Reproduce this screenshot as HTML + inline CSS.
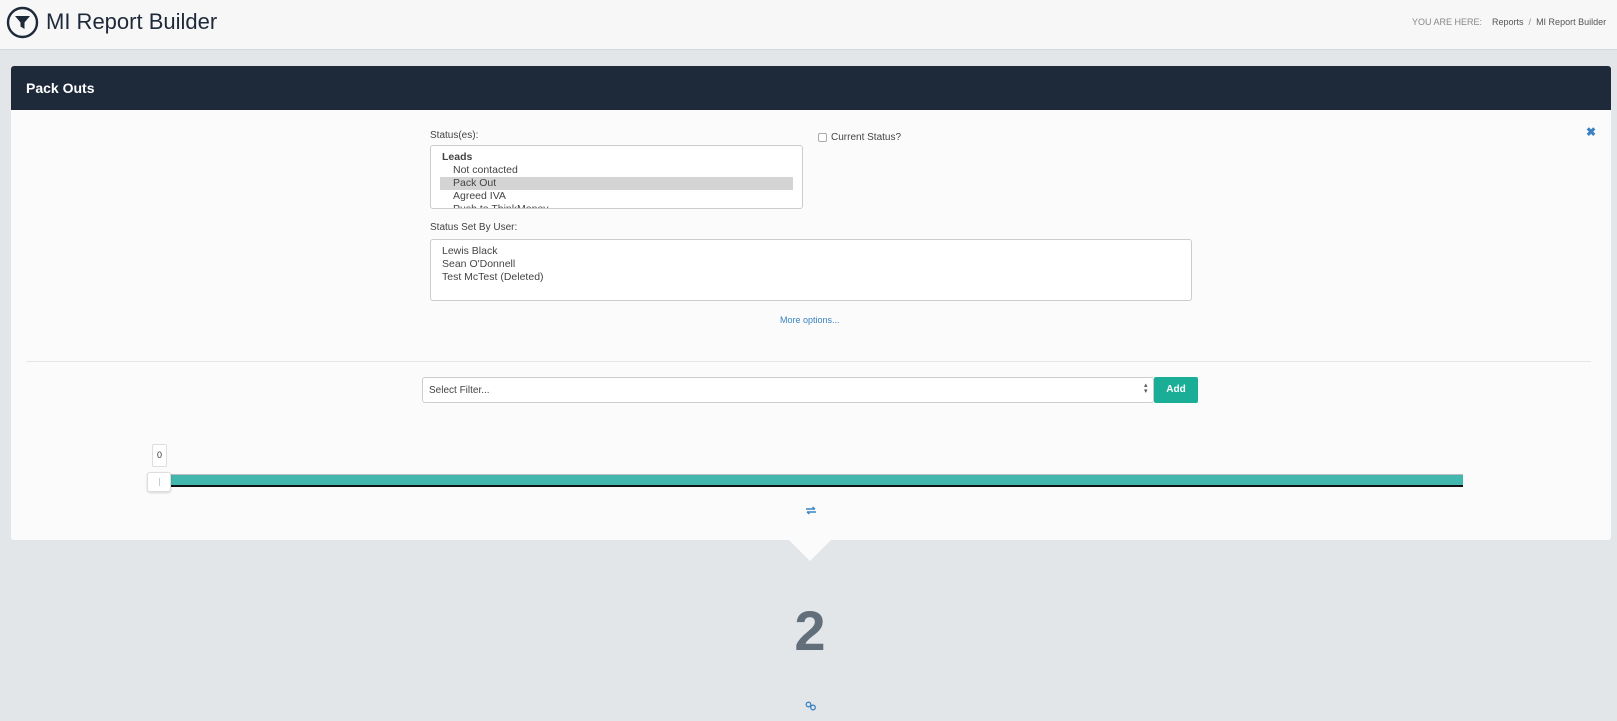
<!DOCTYPE html>
<html><head><style>
*{margin:0;padding:0;box-sizing:border-box}
body{width:1617px;height:721px;overflow:hidden;background:#e3e6e9;font-family:"Liberation Sans",Arial,sans-serif;position:relative;color:#333}
.abs{position:absolute}
.top{left:0;top:0;width:1617px;height:50px;background:#f7f7f7;border-bottom:1px solid #d5d8db}
.panel{left:11px;top:66px;width:1600px;height:474px;background:#fbfbfb;border-radius:3px}
.ph{left:11px;top:66px;width:1600px;height:44px;background:#1e293a;border-radius:3px 3px 0 0}
.lbl{font-size:10px;color:#444}
.box{background:#fff;border:1px solid #ccc;border-radius:3px}
.opt{font-size:10.5px;color:#444;line-height:13px}
</style></head><body>
<div class="abs top"></div>
<svg class="abs" style="left:6px;top:6px" width="33" height="33" viewBox="0 0 33 33"><circle cx="16.5" cy="16.5" r="14.5" fill="none" stroke="#1e293a" stroke-width="2.4"/><path d="M9 10h15l-5.5 6.5v6.5l-4 -2.5v-4z" fill="#1e293a"/></svg>
<div class="abs" style="left:46px;top:9px;font-size:22px;color:#1e293a">MI Report Builder</div>
<div class="abs" style="left:1412px;top:17px;font-size:9px;color:#888;white-space:nowrap">YOU ARE HERE:&nbsp;&nbsp;&nbsp; <span style="color:#555">Reports</span> &nbsp;/&nbsp; <span style="color:#555">MI Report Builder</span></div>
<div class="abs panel"></div>
<div class="abs ph"></div>
<div class="abs" style="left:26px;top:80px;font-size:14px;font-weight:bold;color:#fff">Pack Outs</div>
<div class="abs" style="left:1586px;top:125px;font-size:12px;font-weight:bold;color:#3a82c4">✖</div>
<div class="abs lbl" style="left:430px;top:130px">Status(es):</div>
<div class="abs" style="left:818px;top:133px;width:9px;height:9px;border:1px solid #aaa;border-radius:2px;background:#fff"></div>
<div class="abs lbl" style="left:831px;top:132px">Current Status?</div>
<div class="abs box" style="left:430px;top:145px;width:373px;height:64px;overflow:hidden">
<div class="opt" style="padding:5px 0 0 11px;font-weight:bold">Leads</div>
<div class="opt" style="padding-left:22px">Not contacted</div>
<div class="opt" style="background:#d4d4d4;margin:0 9px 0 9px;padding-left:13px">Pack Out</div>
<div class="opt" style="padding-left:22px">Agreed IVA</div>
<div class="opt" style="padding-left:22px">Push to ThinkMoney</div>
</div>
<div class="abs lbl" style="left:430px;top:222px">Status Set By User:</div>
<div class="abs box" style="left:430px;top:239px;width:762px;height:62px;padding:5px 0 0 11px">
<div class="opt">Lewis Black</div><div class="opt">Sean O'Donnell</div><div class="opt">Test McTest (Deleted)</div></div>
<div class="abs" style="left:780px;top:315px;font-size:9px;color:#3a82c4">More options...</div>
<div class="abs" style="left:26px;top:361px;width:1565px;height:1px;background:#e6e6e6"></div>
<div class="abs box" style="left:422px;top:377px;width:732px;height:26px;font-size:10px;padding:7px 6px;color:#444">Select Filter...</div>
<div class="abs" style="left:1144px;top:383px;font-size:7px;line-height:6px;color:#555">▴<br>▾</div>
<div class="abs" style="left:1154px;top:377px;width:44px;height:26px;background:#1bae97;border-radius:2px;color:#fff;font-size:10px;font-weight:bold;text-align:center;line-height:26px">Add</div>
<div class="abs" style="left:152px;top:444px;width:15px;height:23px;background:#fff;border:1px solid #ddd;border-radius:2px;font-size:9px;text-align:center;line-height:21px">0</div>
<div class="abs" style="left:165px;top:474px;width:1298px;height:13px;background:#41b7ad;border-top:1px solid #bbb;border-bottom:2px solid #111"></div>
<div class="abs" style="left:147px;top:472px;width:24px;height:20px;background:#fff;border:1px solid #ddd;border-radius:3px;box-shadow:0 1px 2px rgba(0,0,0,.15)"><div style="margin:5px auto;width:1px;height:8px;background:#ccc"></div></div>
<svg class="abs" style="left:805px;top:506px" width="12" height="9" viewBox="0 0 12 9"><path d="M1 3h9M7.5 1l2.5 2M11 6H2M4.5 8L2 6" stroke="#3a82c4" stroke-width="1.4" fill="none"/></svg>
<div class="abs" style="left:788px;top:539px;width:0;height:0;border-left:22px solid transparent;border-right:22px solid transparent;border-top:22px solid #fbfbfb"></div>
<div class="abs" style="left:760px;top:598px;width:100px;text-align:center;font-size:56px;font-weight:bold;color:#636e7b">2</div>
<svg class="abs" style="left:805px;top:701px" width="12" height="10" viewBox="0 0 12 10"><circle cx="3.5" cy="3.5" r="2.3" fill="none" stroke="#3a82c4" stroke-width="1.3"/><circle cx="8" cy="6.5" r="2.3" fill="none" stroke="#3a82c4" stroke-width="1.3"/></svg>
</body></html>
